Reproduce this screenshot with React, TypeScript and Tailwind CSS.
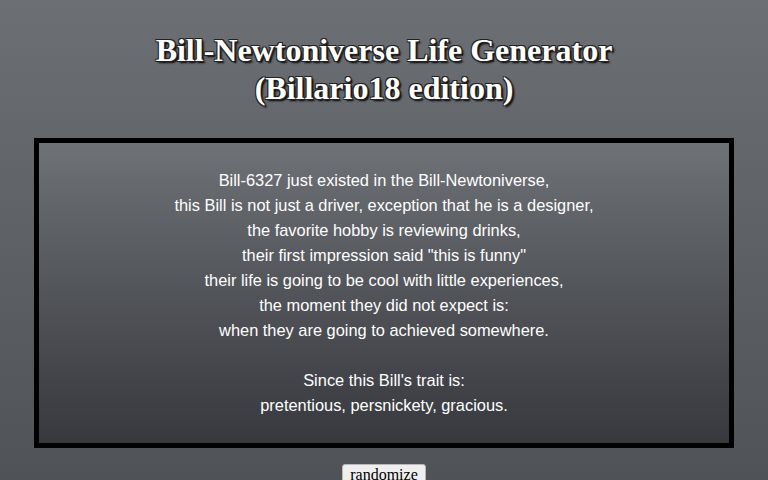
const lines = [
  'Bill-6327 just existed in the Bill-Newtoniverse,',
  'this Bill is not just a driver, exception that he is a designer,',
  'the favorite hobby is reviewing drinks,',
  'their first impression said "this is funny"',
  'their life is going to be cool with little experiences,',
  'the moment they did not expect is:',
  'when they are going to achieved somewhere.',
]

export default function App() {
  return (
    <div className="min-h-screen bg-gradient-to-b from-[#6c6f74] to-[#4f5257] flex flex-col items-center">
      <h1
        className="mt-[31px] text-center text-[32px] leading-[38px] font-bold text-white [font-family:'Liberation_Serif',serif]"
        style={{ textShadow: '-1px -1px 0 #222, 1px -1px 0 #222, -1px 1px 0 #222, 1px 1px 0 #222, 2px 2px 2px #000' }}
      >
        Bill-Newtoniverse Life Generator
        <br />
        (Billario18 edition)
      </h1>

      <div className="mt-[31px] w-[700px] border-[5px] border-black bg-gradient-to-b from-[#6e7176] to-[#37393e] py-[25px] text-center text-[16.4px] leading-[25px] text-white [font-family:'Liberation_Sans',sans-serif]">
        {lines.map((l) => (
          <p key={l}>{l}</p>
        ))}
        <p>&nbsp;</p>
        <p>Since this Bill's trait is:</p>
        <p>pretentious, persnickety, gracious.</p>
      </div>

      <button className="mt-4 rounded-[3px] border border-[#b8b8b8] bg-[#efefef] px-[7px] pt-0 pb-[2px] text-[16px] leading-[19px] text-black [font-family:'Liberation_Serif',serif]">
        randomize
      </button>
    </div>
  )
}
